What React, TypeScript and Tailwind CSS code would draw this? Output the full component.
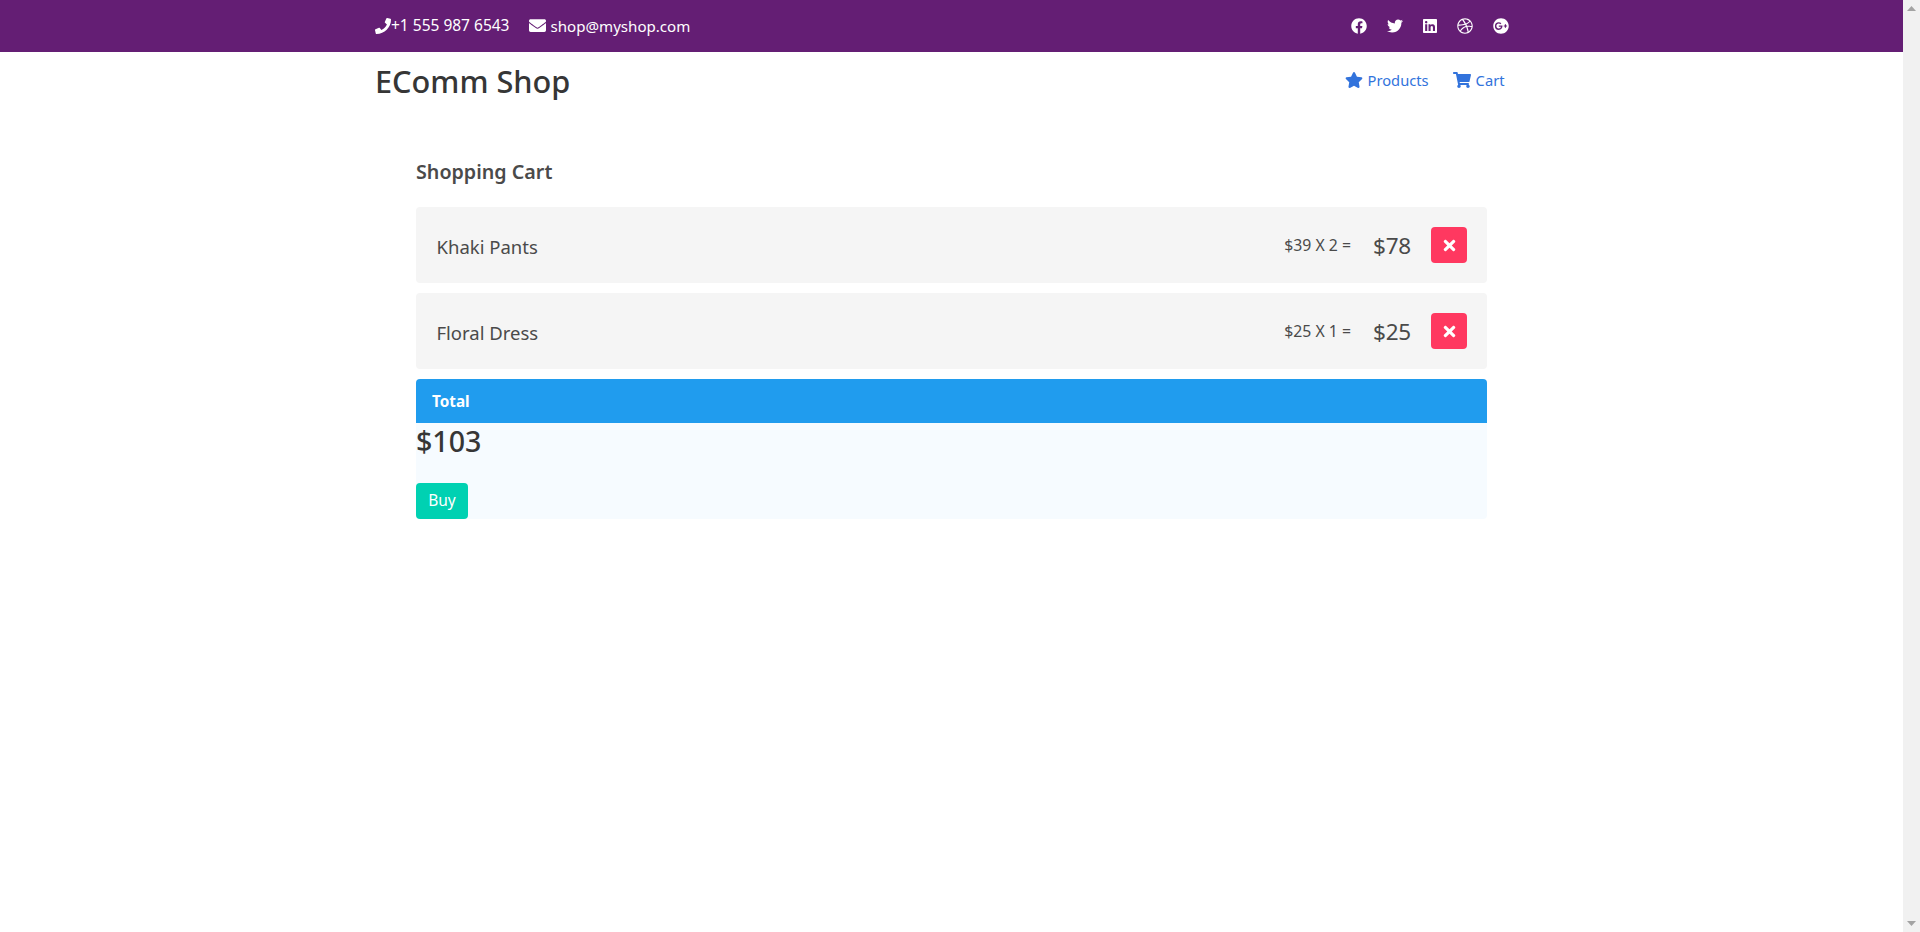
import { FaPhone, FaEnvelope, FaFacebook, FaTwitter, FaLinkedin, FaDribbble, FaGooglePlus, FaStar, FaShoppingCart, FaTimes } from "react-icons/fa";

function CartRow({ name, calc, total }: { name: string; calc: string; total: string }) {
  return (
    <div className="flex items-center justify-between h-[76px] rounded-[4px] bg-[#f5f5f5] pl-[21px] pr-[20px]">
      <span className="text-[18.5px] text-[#4a4a4a] pt-[3px] -ml-[0.5px]">{name}</span>
      <div className="flex items-center">
        <span className="text-[15.8px] text-[#4a4a4a] mr-[2px] pt-[1px]">{calc}</span>
        <span className="text-[22.5px] text-[#4a4a4a] ml-[20px] w-[58px] pt-[1px] -tracking-[0.2px]">{total}</span>
        <button className="w-[36px] h-[36px] rounded-[4px] bg-[#ff3860] text-white flex items-center justify-center">
          <FaTimes size={17} />
        </button>
      </div>
    </div>
  );
}

export default function App() {
  return (
    <div className="flex h-[932px] overflow-hidden bg-white font-['Noto_Sans','Open_Sans',sans-serif]">
      <main className="flex-1 min-w-0">
        <div className="h-[52px] bg-[#641e74] text-white">
          <div className="w-[1152px] mx-auto h-full flex items-center justify-between pr-[19px]">
            <div className="flex items-center text-[15.5px] -ml-[0.5px]">
              <span className="flex items-center"><FaPhone size={16} />+1 555 987 6543</span>
              <span className="flex items-center ml-[20px] gap-[4px] text-[15.1px]"><FaEnvelope size={17} />shop@myshop.com</span>
            </div>
            <div className="flex items-center gap-[20px]">
              <FaFacebook size={16} />
              <FaTwitter size={16} />
              <FaLinkedin size={16} className="w-[14px]" />
              <FaDribbble size={16} />
              <FaGooglePlus size={16} />
            </div>
          </div>
        </div>
        <div className="w-[1152px] mx-auto h-[58px] flex items-start justify-between">
          <h1 className="text-[30.7px] font-medium text-[#363636] leading-[40px] mt-[9px] -ml-[0.5px]">EComm Shop</h1>
          <nav className="flex items-center text-[#3273dc] text-[14.7px] mt-[17px] mr-[23px]">
            <a className="flex items-center gap-[5px]"><FaStar size={18} />Products</a>
            <a className="flex items-center gap-[5px] ml-[24px]"><FaShoppingCart size={18} />Cart</a>
          </nav>
        </div>
        <section className="w-[1071px] mx-auto">
          <h2 className="text-[19.7px] font-semibold text-[#4a4a4a] leading-[28px] mt-[48px] mb-[21px]">Shopping Cart</h2>
          <div className="flex flex-col gap-[10px]">
            <CartRow name="Khaki Pants" calc="$39 X 2 =" total="$78" />
            <CartRow name="Floral Dress" calc="$25 X 1 =" total="$25" />
          </div>
          <div className="mt-[10px] rounded-[4px] bg-[#f6fbff] h-[140px]">
            <div className="h-[44px] rounded-t-[4px] bg-[#209cee] text-white font-bold text-[15.3px] flex items-center pl-[16px] pt-[1px]">Total</div>
            <div className="text-[28.6px] text-[#363636] leading-[40px] -mt-[2px] font-medium">$103</div>
            <button className="mt-[22px] w-[52px] h-[36px] rounded-[4px] bg-[#00d1b2] text-white text-[15.5px] flex items-center justify-center">Buy</button>
          </div>
        </section>
      </main>
      <aside className="w-[17px] shrink-0 bg-[#f1f1f1] flex flex-col justify-between items-center py-[6px]">
        <svg width="9" height="5" viewBox="0 0 9 5"><path d="M4.5 0 9 5H0z" fill="#a3a3a3" /></svg>
        <svg width="9" height="5" viewBox="0 0 9 5"><path d="M0 0h9L4.5 5z" fill="#a3a3a3" /></svg>
      </aside>
    </div>
  );
}
